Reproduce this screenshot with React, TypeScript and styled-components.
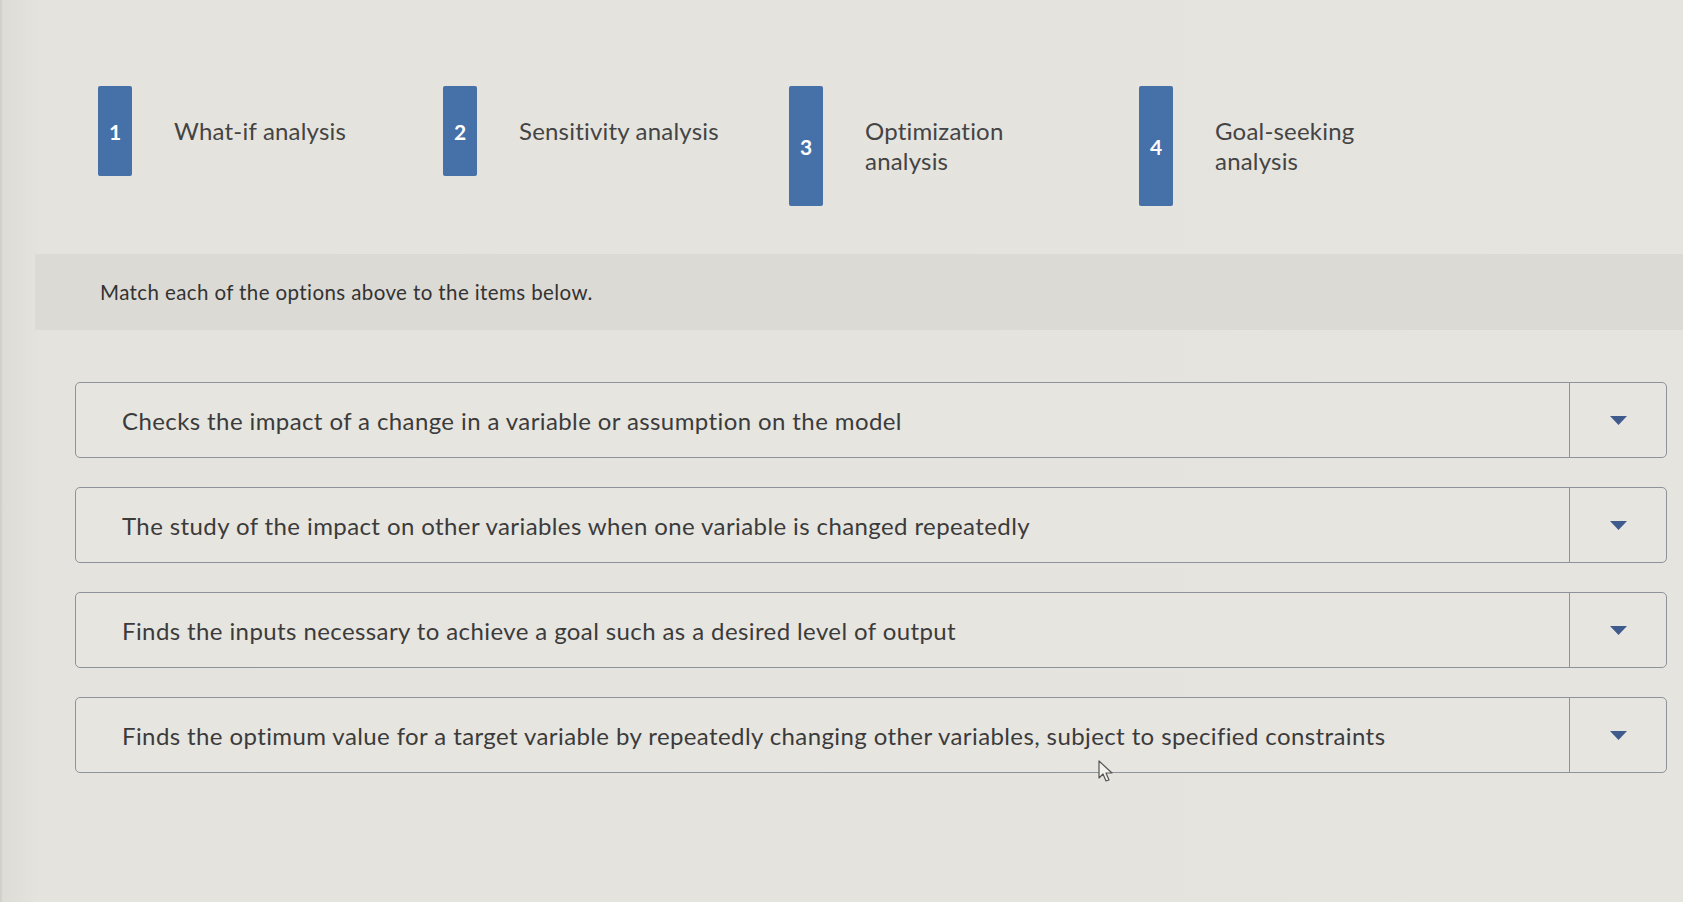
import React from "react";
import styled, { createGlobalStyle } from "styled-components";

const options = [
  "What-if analysis",
  "Sensitivity analysis",
  "Optimization analysis",
  "Goal-seeking analysis",
];

const items = [
  "Checks the impact of a change in a variable or assumption on the model",
  "The study of the impact on other variables when one variable is changed repeatedly",
  "Finds the inputs necessary to achieve a goal such as a desired level of output",
  "Finds the optimum value for a target variable by repeatedly changing other variables, subject to specified constraints",
];

function Caret() {
  return (
    <svg width="17" height="9" viewBox="0 0 17 9">
      <polygon points="0,0 17,0 8.5,9" fill="#3f5a8c" />
    </svg>
  );
}

function Cursor() {
  return (
    <svg width="16" height="24" viewBox="0 0 16 24">
      <path
        d="M1 1 L1 18 L5 14 L8 21 L11 20 L8 13 L14 13 Z"
        fill="#f2f1ee"
        stroke="#555"
        strokeWidth="1.2"
        strokeLinejoin="round"
      />
    </svg>
  );
}

function App() {
  return (
    <>
      <GlobalStyle />
      <Page>
        <Options>
          {options.map((label, i) => (
            <Option key={label}>
              <Badge>{i + 1}</Badge>
              <Label>{label}</Label>
            </Option>
          ))}
        </Options>
        <Prompt>Match each of the options above to the items below.</Prompt>
        <Rows>
          {items.map((text, i) => (
            <Row key={text}>
              <RowText>{text}</RowText>
              <Toggle aria-label="choose">
                <Caret />
              </Toggle>
              {i === 3 && (
                <Pointer>
                  <Cursor />
                </Pointer>
              )}
            </Row>
          ))}
        </Rows>
      </Page>
    </>
  );
}

export default App;

const GlobalStyle = createGlobalStyle`
  html, body {
    margin: 0;
    padding: 0;
  }
  body {
    background: #e4e2dd;
    font-family: Lato, "Open Sans", sans-serif;
    color: #3c3c3c;
  }
`;

const Page = styled.main`
  min-height: 100vh;
  box-sizing: border-box;
  padding-top: 86px;
  background: linear-gradient(90deg, #cfccc6 0, #dedcd7 3px, #e5e3de 40px, #e6e4df 100%);
`;

const Options = styled.section`
  display: grid;
  grid-template-columns: 345px 346px 350px 346px;
  padding-left: 98px;
  align-items: start;
`;

const Option = styled.div`
  display: flex;
  align-items: stretch;
`;

const Badge = styled.div`
  flex: 0 0 34px;
  display: flex;
  align-items: center;
  justify-content: center;
  background: #4670a8;
  border-radius: 2px;
  color: #fff;
  font-weight: 700;
  font-size: 21px;
`;

const Label = styled.div`
  margin-left: 42px;
  padding: 30px 0;
  max-width: 222px;
  font-size: 24px;
  letter-spacing: 0.2px;
  line-height: 30px;
  color: #444;
`;

const Prompt = styled.p`
  margin: 48px 0 0 35px;
  height: 76px;
  display: flex;
  align-items: center;
  padding-left: 65px;
  background: #dcdad5;
  font-size: 20.5px;
  letter-spacing: 0.4px;
  color: #333;
`;

const Rows = styled.section`
  display: flex;
  flex-direction: column;
  gap: 29px;
  margin: 52px 16px 0 75px;
`;

const Row = styled.div`
  position: relative;
  display: flex;
  height: 76px;
  box-sizing: border-box;
  border: 1px solid #8d939a;
  border-radius: 5px;
  background: #e7e5e0;
`;

const RowText = styled.div`
  flex: 1;
  display: flex;
  align-items: center;
  padding-left: 46px;
  font-size: 24px;
  letter-spacing: 0.4px;
  color: #3b3b3b;
`;

const Toggle = styled.div`
  flex: 0 0 96px;
  display: flex;
  align-items: center;
  justify-content: center;
  border-left: 1px solid #8d939a;
`;

const Pointer = styled.div`
  position: absolute;
  left: 1022px;
  top: 62px;
  line-height: 0;
`;
